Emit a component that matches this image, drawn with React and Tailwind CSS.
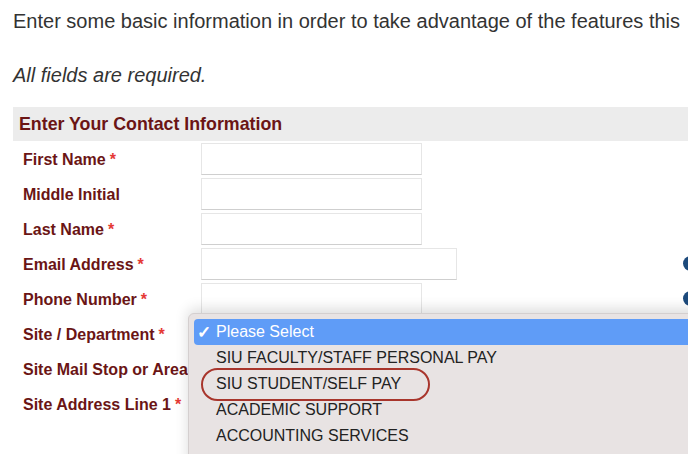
import React from "react";

const rows = [
  { label: "First Name", req: true, w: "w-[221px]" },
  { label: "Middle Initial", req: false, w: "w-[221px]" },
  { label: "Last Name", req: true, w: "w-[221px]" },
  { label: "Email Address", req: true, w: "w-[256px]", info: true },
  { label: "Phone Number", req: true, w: "w-[221px]", info: true },
  { label: "Site / Department", req: true, w: null },
  { label: "Site Mail Stop or Area", req: false, w: null },
  { label: "Site Address Line 1", req: true, w: null },
];

const options = [
  "SIU FACULTY/STAFF PERSONAL PAY",
  "SIU STUDENT/SELF PAY",
  "ACADEMIC SUPPORT",
  "ACCOUNTING SERVICES",
];

export default function App() {
  return (
    <div
      className="relative w-[688px] h-[454px] overflow-hidden bg-white"
      style={{ fontFamily: '"Liberation Sans", Arial, Helvetica, sans-serif' }}
    >
      <div className="pl-[13px] pt-[9px] w-[760px]">
        <p className="text-[20px] leading-[24px] text-[#333] whitespace-nowrap">
          Enter some basic information in order to take advantage of the features this
        </p>
        <p className="mt-[30px] text-[20px] leading-[24px] italic text-[#333]">
          All fields are required.
        </p>
        <div className="mt-[20px] h-[34px] bg-[#ececec] flex items-center pl-[6px]">
          <span className="text-[17.8px] font-bold text-[#6b1515]">
            Enter Your Contact Information
          </span>
        </div>
        <div className="flex flex-col">
          {rows.map((r) => (
            <div key={r.label} className="h-[35px] flex items-center pl-[10px] w-[675px]">
              <div className="w-[178px] shrink-0 pt-[3px] text-[16px] font-bold text-[#6b1515] whitespace-nowrap">
                {r.label}
                {r.req && <span className="text-[#e53935] ml-[4px]">*</span>}
              </div>
              {r.w && (
                <div
                  className={`${r.w} h-[32px] mt-[1px] border border-[#e6e6e6] border-b-[#cfcfcf] bg-white`}
                />
              )}
              {r.info && (
                <div className="ml-auto mr-[-10px] w-[15px] h-[15px] rounded-full bg-[#1c4a7c]" />
              )}
            </div>
          ))}
        </div>
      </div>

      {/* Open select menu */}
      <div className="absolute left-[188px] top-[313px] w-[540px] h-[200px] bg-[#e8e3e3] rounded-[6px] border border-[#d4cfcf] shadow-[0_-4px_14px_rgba(0,0,0,0.14)] pt-[5px] pl-[5px]">
        <div className="h-[26px] bg-[#5f9cf7] rounded-[4px] flex items-center text-white text-[16px]">
          <span className="w-[22px] pl-[3px] text-[17px] font-bold leading-none">✓</span>
          <span>Please Select</span>
        </div>
        {options.map((o) => (
          <div key={o} className="h-[26px] flex items-center pl-[22px] text-[16px] text-[#222] whitespace-nowrap">
            {o}
          </div>
        ))}
        <div className="absolute left-[12px] top-[54px] w-[229px] h-[33px] rounded-full border-2 border-[#a8352c]" />
      </div>
    </div>
  );
}
